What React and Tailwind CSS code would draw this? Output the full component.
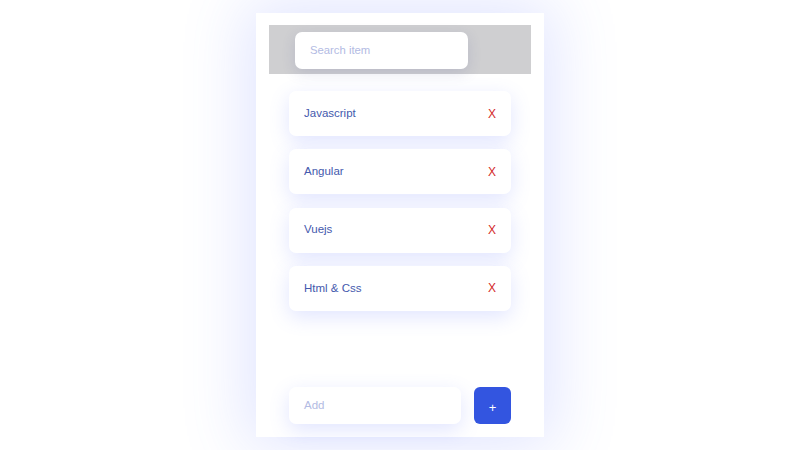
import React from "react";

const items = ["Javascript", "Angular", "Vuejs", "Html & Css"];

export default function App() {
  return (
    <div className="w-[800px] h-[450px] bg-white flex justify-center pt-[13px] overflow-hidden" style={{ fontFamily: '"Liberation Sans", Arial, sans-serif' }}>
      <div className="w-[288px] h-[424px] bg-white flex flex-col px-[13px] pt-[12px] pb-[13px] shadow-[0_0_60px_10px_rgba(90,110,255,0.18)]">
        <div className="h-[49px] bg-[#cfcfd1] pl-[26px] pt-[7px]">
          <div className="w-[173px] h-[37px] bg-white rounded-[7px] flex items-center pl-[15px] text-[11.3px] text-[#b3bbe3] shadow-[0_4px_14px_rgba(60,70,140,0.15)]">
            Search item
          </div>
        </div>
        <div className="flex flex-col gap-[13.3px] px-[20px] pt-[17px]">
          {items.map((t) => (
            <div key={t} className="h-[45px] bg-white rounded-[7px] flex items-center justify-between pl-[15px] pr-[15px] shadow-[0_6px_20px_rgba(90,110,255,0.18)]">
              <span className="text-[11.5px] text-[#4459ad]">{t}</span>
              <span className="text-[12px] text-[#d42a2a]">X</span>
            </div>
          ))}
        </div>
        <div className="mt-auto flex gap-[13px] px-[20px]">
          <div className="w-[172px] h-[37px] bg-white rounded-[7px] flex items-center pl-[15px] text-[11.5px] text-[#b3bbe3] shadow-[0_6px_20px_rgba(90,110,255,0.18)]">
            Add
          </div>
          <div className="w-[37px] h-[37px] bg-[#3355e0] rounded-[6px] flex items-center justify-center text-white text-[13px] pt-[4px]">
            +
          </div>
        </div>
      </div>
    </div>
  );
}
